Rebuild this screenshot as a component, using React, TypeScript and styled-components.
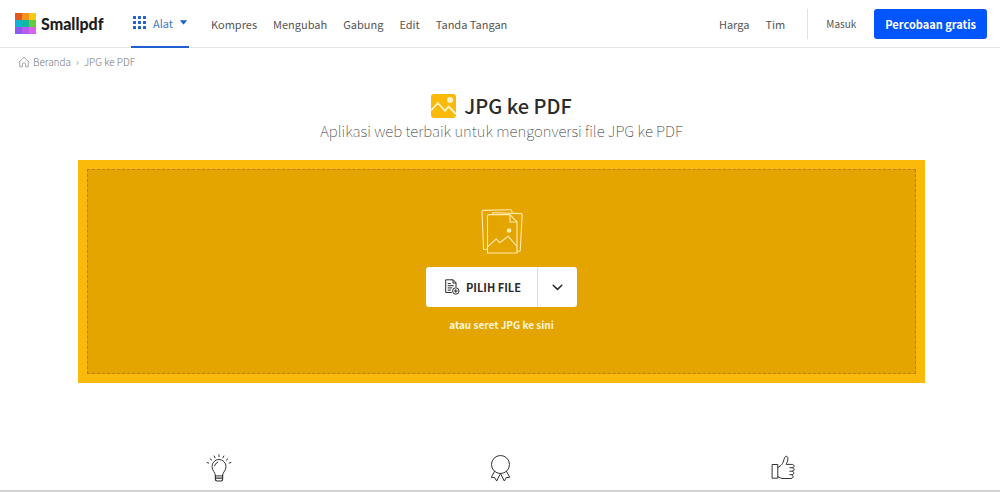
import React from "react";
import styled, { createGlobalStyle } from "styled-components";

const GlobalStyle = createGlobalStyle`
  *, *::before, *::after { box-sizing: border-box; }
  body {
    margin: 0;
    background: #fff;
    color: #555;
    font-family: "Noto Sans CJK SC", "Noto Sans", sans-serif;
    font-size: 11px;
    line-height: 16px;
  }
  button { font: inherit; cursor: pointer; }
  a { color: inherit; text-decoration: none; }
  svg { display: block; flex: none; }
`;

const Header = styled.header`
  display: flex;
  justify-content: space-between;
  height: 48px;
  padding: 0 13px 0 15px;
  border-bottom: 1px solid #e6e6e6;
`;

const Group = styled.div`
  display: flex;
  align-items: center;
`;

const Logo = styled.a`
  display: flex;
  align-items: center;
  gap: 5px;
  width: 116px;
  color: #1e1e1e;
  font-family: Lato, sans-serif;
  font-size: 16px;
  font-weight: 900;
`;

const Nav = styled.nav`
  display: flex;
  align-items: center;
  gap: 16px;
`;

const ToolsButton = styled.button`
  display: flex;
  align-items: center;
  gap: 7px;
  height: 48px;
  margin: 0 6px 0 0;
  padding: 0 2px;
  border: 0;
  border-bottom: 2px solid #1f5fd0;
  background: none;
  color: #3f78c9;
`;

const NavLink = styled.a<{ $small?: boolean }>`
  font-size: ${({ $small }) => ($small ? "10px" : "11px")};
  white-space: nowrap;
`;

const Account = styled.div`
  display: flex;
  align-items: center;
  gap: 18px;
  height: 30px;
  margin-left: 22px;
  padding-left: 18px;
  border-left: 1px solid #e2e2e2;
`;

const TrialButton = styled.button`
  height: 30px;
  padding: 0 11px;
  border: 0;
  border-radius: 3px;
  background: #0055ff;
  color: #fff;
  font-weight: 700;
  white-space: nowrap;
`;

const Breadcrumb = styled.nav`
  display: flex;
  align-items: center;
  height: 28px;
  padding: 0 18px;
  gap: 5px;
  color: #777;
  font-size: 10px;
  font-weight: 300;
`;

const Crumb = styled.a`
  display: flex;
  align-items: center;
  gap: 3px;
`;

const Main = styled.main`
  padding: 16px 75px 8px 78px;
  border-bottom: 2px solid #d2d2d2;
`;

const Heading = styled.h1`
  display: flex;
  align-items: center;
  justify-content: center;
  gap: 8px;
  margin: 0;
  color: #2b2b2b;
  font-size: 20px;
  font-weight: 500;
  line-height: 28px;
`;

const Subtitle = styled.p`
  margin: 0;
  color: #333;
  font-size: 15px;
  font-weight: 100;
  line-height: 22px;
  text-align: center;
`;

const DropZone = styled.section`
  margin-top: 18px;
  padding: 9px;
  background: #fbb90a;
`;

const DropArea = styled.div`
  display: flex;
  flex-direction: column;
  align-items: center;
  padding: 39px 16px 40px;
  border: 1px dashed #b88400;
  background: #e5a500;
`;

const SplitButton = styled.div`
  display: flex;
  height: 40px;
  margin: 13px 0 10px;
  border-radius: 3px;
  background: #fff;
`;

const ChooseButton = styled.button`
  display: flex;
  align-items: center;
  gap: 6px;
  padding: 0 16px 0 19px;
  border: 0;
  background: none;
  color: #2b2b2b;
  font-weight: 700;
`;

const MoreButton = styled.button`
  display: grid;
  place-items: center;
  width: 40px;
  padding: 0;
  border: 0;
  border-left: 1px solid #e0e0e0;
  background: none;
  color: #2b2b2b;
`;

const Hint = styled.p`
  margin: 0;
  color: #fff6dc;
  font-size: 10px;
  font-weight: 700;
`;

const Features = styled.section`
  display: grid;
  grid-template-columns: repeat(3, 1fr);
  justify-items: center;
  margin-top: 71px;
`;

const logoColors = [
  "#e2571e", "#f5921c", "#fcc911",
  "#0fb4d4", "#12b8a0", "#62cc3c",
  "#8a5cf0", "#b45cf0", "#d862f0",
];

const LogoMark = () => (
  <svg width="21" height="21" viewBox="0 0 21 21" shapeRendering="crispEdges" aria-hidden="true">
    {logoColors.map((fill, i) => (
      <rect key={fill} x={(i % 3) * 7} y={Math.floor(i / 3) * 7} width="7" height="7" fill={fill} />
    ))}
  </svg>
);

const GridIcon = () => (
  <svg width="13" height="13" viewBox="0 0 13 13" fill="#1f5fd0" aria-hidden="true">
    {[0, 5, 10].flatMap((y) =>
      [0, 5, 10].map((x) => <rect key={`${x}-${y}`} x={x} y={y} width="3" height="3" rx="0.5" />)
    )}
  </svg>
);

const CaretIcon = () => (
  <svg width="7" height="5" viewBox="0 0 8 5" fill="#1f5fd0" aria-hidden="true">
    <path d="M.8 0h6.4q.8 0 .4.7L4.4 4.5q-.4.5-.8 0L.4.7Q0 0 .8 0z" />
  </svg>
);

const HomeIcon = () => (
  <svg width="12" height="12" viewBox="0 0 12 12" fill="none" stroke="#8f8f8f" strokeWidth="0.8" strokeLinejoin="round" aria-hidden="true">
    <path d="M.8 6.2 6 1.2l5.2 5M1.8 5.4v5.4h2.7V8.3a1.5 1.5 0 0 1 3 0v2.5h2.7V5.4" />
  </svg>
);

const ImageIcon = () => (
  <svg width="25" height="24" viewBox="0 0 25 24" fill="none" aria-hidden="true">
    <rect width="25" height="24" rx="3" fill="#fbb90a" />
    <circle cx="19" cy="6" r="3" fill="#fff4c9" />
    <path d="M0 16.5 6.8 9l7.3 8 3.4-4.500 7.500 7.500" stroke="#fff4c9" strokeWidth="1.8" strokeLinejoin="round" />
  </svg>
);

const PhotosIcon = () => (
  <svg width="42" height="45" viewBox="0 0 42 45" fill="none" stroke="#ffeab0" strokeWidth="1.1" strokeLinejoin="round" aria-hidden="true">
    <path d="M6.500 40.200 2.600 40.500 1 2.700Q1 1.500 2.200 1.400L29 .7q1.800 0 1.900 1.300v1.500" />
    <path d="M11.500 5.600v-1.100q.1-1 1.200-.9l27.300 1q1.200.1 1.100 1.300L39.300 41.400q-.2 1-1.200.9l-2-.1" />
    <path d="M6.500 44V7.200q0-1.600 1.600-1.600H29l7 7.400v31z" />
    <path d="M29 5.600V13h7M6.500 38l8.800-8.200 3.500 4 8.300-6.600L36 37.500" />
    <circle cx="28" cy="21.500" r="2.300" fill="#ffeab0" stroke="none" />
  </svg>
);

const FileAddIcon = () => (
  <svg width="15" height="16" viewBox="0 0 15 16" fill="none" stroke="#2b2b2b" strokeLinejoin="round" aria-hidden="true">
    <path d="M6.800 13.500H.7V.8h7.500l2.800 3v4.300M8 .8v3.200h3M2.700 4.500h3M2.700 6.700h6M2.700 8.900h4.500M2.700 11.100h3.200" />
    <circle cx="10.800" cy="12" r="3.200" />
    <path d="M10.800 10.200v3.600M9 12h3.600" />
  </svg>
);

const ChevronIcon = () => (
  <svg width="11" height="7" viewBox="0 0 11 7" fill="none" stroke="currentColor" strokeWidth="1.5" strokeLinecap="round" strokeLinejoin="round" aria-hidden="true">
    <path d="M1.2 1.2 5.5 5.4 9.8 1.2" />
  </svg>
);

const BulbIcon = () => (
  <svg width="26" height="28" viewBox="0 0 26 28" fill="none" stroke="#333" strokeLinecap="round" strokeLinejoin="round" aria-hidden="true">
    <path d="M9.400 21.500C9.400 18 6 16.800 6 12.500a7 7 0 0 1 14 0c0 4.300-3.400 5.500-3.400 9z" />
    <path d="M9.400 21.500v3.800q0 1.700 1.700 1.700h3.800q1.700 0 1.700-1.700v-3.800M9.400 24.200h7.200" strokeWidth="1.2" />
    <path d="M8.500 11.800a4.500 4.500 0 0 1 3.300-3.500" />
    <path d="M13 .8v2M8.200 2l.8 1.800M17.800 2 17 3.800M4.200 4.800l1.500 1.300M21.800 4.800l-1.500 1.300M1 8.500l1.800.6M25 8.500l-1.800.6" />
  </svg>
);

const RibbonIcon = () => (
  <svg width="26" height="28" viewBox="0 0 26 28" fill="none" stroke="#333" strokeLinejoin="round" aria-hidden="true">
    <circle cx="12.500" cy="10.500" r="9" />
    <path d="M6.600 17.200 3.300 23.300l3.400.3 2 3.400 3.800-7.500 3.800 7.500 2-3.400 3.400-.3L18.400 17.200" />
  </svg>
);

const ThumbIcon = () => (
  <svg width="26" height="28" viewBox="0 0 26 28" fill="none" stroke="#333" strokeLinecap="round" strokeLinejoin="round" aria-hidden="true">
    <path d="M1.500 10.500h5.300v13.700H1.500z" />
    <path d="M6.800 13.500c4-2 5.200-4 6.200-8.200.6-2.400 1.800-3.500 3-2.900 1.600.8 1.100 4.200-.8 8h6.200c2.200 0 2.200 3.300 0 3.300h-2.600M21.600 13.700c2.300.2 2.100 3.400-.2 3.500h-2.600M21.400 17.200c2 .2 1.800 3.500-.4 3.500h-2.200M21 20.700c1.700.2 1.600 3.800-1 3.800h-8c-2.500 0-3-.8-5.200-2" />
  </svg>
);

export default function App() {
  return (
    <>
      <GlobalStyle />
      <Header>
        <Group>
          <Logo href="#">
            <LogoMark />
            Smallpdf
          </Logo>
          <Nav aria-label="Utama">
            <ToolsButton type="button">
              <GridIcon />
              Alat
              <CaretIcon />
            </ToolsButton>
            <NavLink href="#">Kompres</NavLink>
            <NavLink href="#">Mengubah</NavLink>
            <NavLink href="#">Gabung</NavLink>
            <NavLink href="#">Edit</NavLink>
            <NavLink href="#">Tanda Tangan</NavLink>
          </Nav>
        </Group>
        <Group>
          <Nav aria-label="Produk">
            <NavLink href="#">Harga</NavLink>
            <NavLink href="#">Tim</NavLink>
          </Nav>
          <Account>
            <NavLink href="#" $small>Masuk</NavLink>
            <TrialButton type="button">Percobaan gratis</TrialButton>
          </Account>
        </Group>
      </Header>
      <Breadcrumb aria-label="Breadcrumb">
        <Crumb href="#">
          <HomeIcon />
          Beranda
        </Crumb>
        <span>›</span>
        <Crumb href="#">JPG ke PDF</Crumb>
      </Breadcrumb>
      <Main>
        <Heading>
          <ImageIcon />
          JPG ke PDF
        </Heading>
        <Subtitle>Aplikasi web terbaik untuk mengonversi file JPG ke PDF</Subtitle>
        <DropZone>
          <DropArea>
            <PhotosIcon />
            <SplitButton>
              <ChooseButton type="button">
                <FileAddIcon />
                PILIH FILE
              </ChooseButton>
              <MoreButton type="button" aria-label="Sumber lain">
                <ChevronIcon />
              </MoreButton>
            </SplitButton>
            <Hint>atau seret JPG ke sini</Hint>
          </DropArea>
        </DropZone>
        <Features>
          <BulbIcon />
          <RibbonIcon />
          <ThumbIcon />
        </Features>
      </Main>
    </>
  );
}
